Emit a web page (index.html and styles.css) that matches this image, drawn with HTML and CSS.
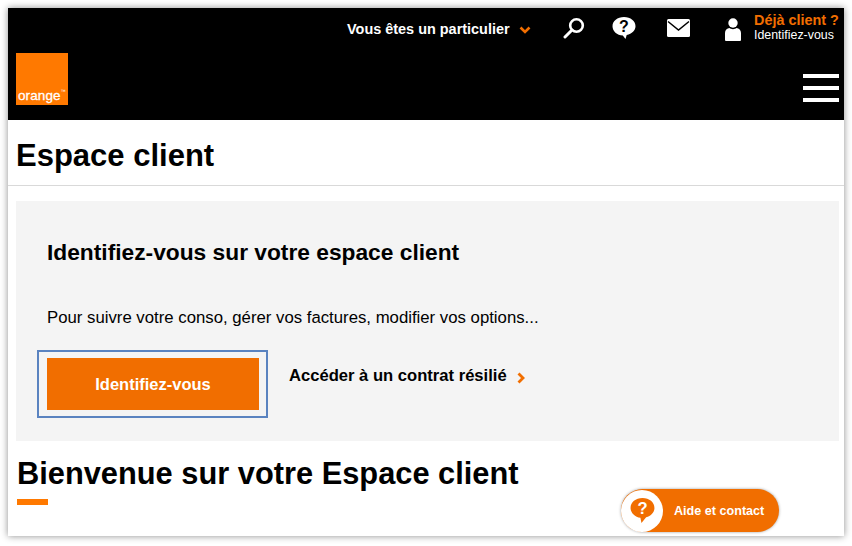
FILE: index.html
```html
<!DOCTYPE html>
<html lang="fr">
<head>
<meta charset="utf-8">
<title>Espace client</title>
<link rel="stylesheet" href="styles.css">
</head>
<body>
<div class="page">
  <header class="header">
    <div class="topbar">
      <a class="segment">Vous êtes un particulier
        <svg class="chev" viewBox="0 0 12 8" width="12" height="8"><path d="M1.500 1.500 6 6l4.500-4.500" fill="none" stroke="#f16e00" stroke-width="2.600"/></svg>
      </a>
      <svg class="ico search" viewBox="0 0 22 22" width="22" height="22"><circle cx="13.500" cy="8.500" r="6.300" fill="none" stroke="#fff" stroke-width="2.600"/><path d="M9 13 2 20" stroke="#fff" stroke-width="3" stroke-linecap="round"/></svg>
      <svg class="ico help" viewBox="0 0 24 24" width="24" height="24"><path d="M12 1C5.400 1 .5 5 .5 10.200c0 5 4.500 9 10.300 9.200L13.500 23l1.200-4C20 17.800 23.500 14.500 23.500 10.200 23.500 5 18.600 1 12 1Z" fill="#fff"/><text x="12" y="16" class="qmark" fill="#000">?</text></svg>
      <svg class="ico mail" viewBox="0 0 23 18" width="23" height="18"><rect width="23" height="18" rx="1.500" fill="#fff"/><path d="M1 2.500 11.500 11 22 2.500" fill="none" stroke="#000" stroke-width="1.500"/></svg>
      <svg class="ico user" viewBox="0 0 16 23" width="16" height="23"><circle cx="8" cy="5" r="4.700" fill="#fff"/><path d="M0 22V15c0-3 2-4.500 4.500-5C6 11.500 10 11.500 11.500 10 14 10.500 16 12 16 15v7a1 1 0 0 1-1 1H1a1 1 0 0 1-1-1Z" fill="#fff"/></svg>
      <div class="login">
        <span class="login-top">Déjà client ?</span>
        <span class="login-sub">Identifiez-vous</span>
      </div>
    </div>
    <div class="brandbar">
      <div class="logo"><span class="logo-text">orange</span><span class="tm">™</span></div>
      <div class="burger"><span></span><span></span><span></span></div>
    </div>
  </header>

  <div class="title-row"><h1 class="title">Espace client</h1></div>

  <main class="main">
    <section class="panel">
      <h2 class="panel-title">Identifiez-vous sur votre espace client</h2>
      <p class="panel-text">Pour suivre votre conso, gérer vos factures, modifier vos options...</p>
      <div class="actions">
        <div class="focus-ring"><a class="btn">Identifiez-vous</a></div>
        <a class="link">Accéder à un contrat résilié
          <svg class="link-chev" viewBox="0 0 8 12" width="8" height="12"><path d="M1.500 1.500 6 6l-4.500 4.500" fill="none" stroke="#f16e00" stroke-width="2.800"/></svg>
        </a>
      </div>
    </section>
    <h2 class="welcome">Bienvenue sur votre Espace client</h2>
    <div class="rule"></div>
  </main>

  <a class="help-pill">
    <span class="pill-disc">
      <svg viewBox="0 0 24 26" width="25" height="27"><path d="M12 1C5.400 1 .5 5.200 .5 10.500c0 5 4.500 9 9.500 9.500L11 25l4.500-5.500c4.700-1.200 8-4.600 8-9C23.500 5.200 18.600 1 12 1Z" fill="#f16e00"/><text x="12" y="16.500" class="qmark" fill="#fff">?</text></svg>
    </span>
    <span class="pill-text">Aide et contact</span>
  </a>
</div>
</body>
</html>
```

FILE: styles.css
```css
* { box-sizing: border-box; }
html, body { margin: 0; padding: 0; height: 100%; background: #fff; overflow: hidden; }
body { padding: 8px 8px 0 8px; font-family: "Liberation Sans", Arial, sans-serif; color: #000; }
.page {
  position: relative;
  width: 836px;
  height: 528px;
  background: #fff;
  box-shadow: 0 0 7px rgba(0,0,0,.45);
}
.header { background: #000; height: 112px; display: flex; flex-direction: column; }
.topbar { height: 41px; display: flex; align-items: center; color: #fff; position: relative; }
.segment { margin-left: 339px; font-size: 14.450px; font-weight: 700; display: flex; align-items: center; gap: 9px; width: 185px; white-space: nowrap; }
.chev { margin-top: 3px; }
.ico { display: block; flex: none; }
.search { margin-left: 31px; margin-top: -2px; }
.help { margin-left: 27px; margin-top: -1px; }
.mail { margin-left: 31px; margin-top: -1px; }
.user { margin-left: 35px; margin-top: 1px; }
.qmark { font: 700 16px "Liberation Sans", Arial, sans-serif; text-anchor: middle; }
.login { margin-left: 13px; display: flex; flex-direction: column; margin-top: -3px; }
.login-top { color: #f16e00; font-size: 14.400px; font-weight: 700; line-height: 16px; white-space: nowrap; }
.login-sub { font-size: 12.400px; line-height: 14px; white-space: nowrap; }
.brandbar { flex: 1; display: flex; justify-content: space-between; padding: 4px 5px 0 8px; }
.logo { width: 52px; height: 52px; background: #ff7900; position: relative; display: flex; align-items: flex-end; padding: 0 0 1px 2px; }
.logo-text { color: #fff; font-size: 13.500px; font-weight: 400; letter-spacing: .1px; line-height: 16px; -webkit-text-stroke: .3px #fff; }
.tm { color: #fff; font-size: 5px; line-height: 14px; align-self: flex-end; margin-bottom: 6px; }
.burger { width: 36px; margin-top: 21px; display: flex; flex-direction: column; gap: 8px; }
.burger span { display: block; height: 4px; background: #fff; }
.title-row { height: 66px; border-bottom: 1px solid #d9d9d9; padding: 16px 0 0 8px; }
.title { margin: 0; font-size: 31px; line-height: 40px; font-weight: 700; }
.main { padding: 15px 5px 0 8px; }
.panel { background: #f4f4f4; height: 240px; padding: 36px 0 0 31px; }
.panel-title { margin: 0; font-size: 22.750px; line-height: 30px; font-weight: 700; }
.panel-text { margin: 41px 0 0; font-size: 16.750px; line-height: 20px; }
.actions { display: flex; align-items: flex-start; margin: 22px 0 0 -10px; }
.focus-ring { border: 2px solid #5a83c0; padding: 6px 7px 5px 8px; width: 231px; height: 68px; }
.btn { display: flex; align-items: center; justify-content: center; height: 52px; background: #f16e00; color: #fff; font-size: 16.500px; font-weight: 700; }
.link { margin: 16px 0 0 21px; font-size: 16.600px; line-height: 20px; font-weight: 700; display: flex; align-items: center; gap: 10px; white-space: nowrap; }
.link-chev { margin-top: 3px; }
.welcome { margin: 16px 0 0 1px; font-size: 30.800px; line-height: 34px; font-weight: 700; white-space: nowrap; }
.rule { width: 31px; height: 6px; background: #ff7900; margin: 8px 0 0 1px; }
.help-pill {
  position: absolute; left: 613px; top: 481px; width: 158px; height: 43px;
  background: #f16e00; border-radius: 22px; display: flex; align-items: center;
  box-shadow: 0 0 3px rgba(0,0,0,.4); color: #fff;
}
.pill-disc { width: 42px; height: 42px; border-radius: 50%; background: #fff; display: flex; align-items: center; justify-content: center; flex: none; }
.pill-text { margin-left: 11px; font-size: 12.600px; font-weight: 700; white-space: nowrap; }
```
